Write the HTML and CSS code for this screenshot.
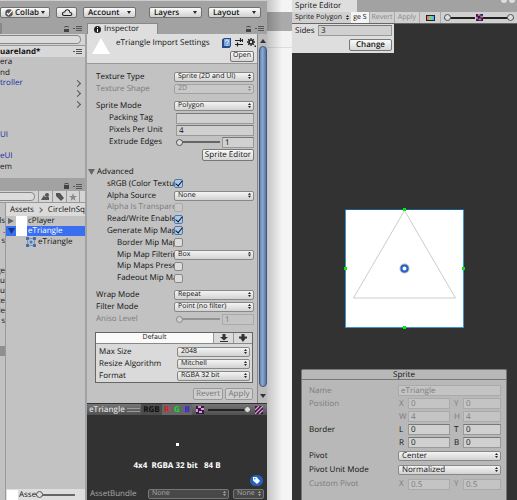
FILE: index.html
```html
<!DOCTYPE html>
<html lang="en">

<head>
    <meta charset="UTF-8">
    <meta name="viewport" content="width=device-width, initial-scale=1.0">
    <title>Unity - Sprite Editor</title>
    <link rel="stylesheet" href="styles.css">
</head>

<body>
    <div class="editor">
        <div class="toolbar">
            <button class="drop collab"><svg width="8" height="8" viewBox="0 0 8 8"><circle cx="4" cy="4" r="3.8" fill="#555"/><path d="M2 4l1.5 1.6L7 1.6" fill="none" stroke="#fff" stroke-width="1.2"/></svg>Collab</button>
            <button class="cloud" aria-label="Services"><svg width="12" height="9" viewBox="0 0 12 9"><path d="M3 7.5h6.2c2.3-.2 2.2-3-.2-3C8.700 1.500 4.500.5 3.800 4 .8 3.800.8 7.300 3 7.500z" fill="none" stroke="#222" stroke-width="1.1"/></svg></button>
            <button class="drop account">Account</button>
            <button class="drop layers">Layers</button>
            <button class="drop layout">Layout</button>
        </div>

        <div class="docks">
            <div class="left">
                <div class="tabs"><span class="tab stub"></span><span class="lock"></span><span class="menu"></span></div>
                <div class="search-row"><input type="text" class="search" aria-label="Search hierarchy"></div>
                <div class="scene"><b>uareland*</b><span class="menu"></span></div>
                <ul class="hierarchy">
                    <li>era</li>
                    <li>nd</li>
                    <li class="prefab more">troller</li>
                    <li class="more"></li>
                    <li class="more"></li>
                    <li></li>
                    <li></li>
                    <li class="prefab">UI</li>
                    <li></li>
                    <li class="prefab">eUI</li>
                    <li>em</li>
                </ul>

                <div class="tabs project-tabs"><span class="lock"></span><span class="menu"></span></div>
                <div class="search-row project-search">
                    <input type="text" class="search" aria-label="Search project">
                    <button class="filter" aria-label="Type"><svg width="9" height="8" viewBox="0 0 9 8"><path d="M0 7l3-5 2 5zM4 4h4v3H4z" fill="#555"/><circle cx="6" cy="2" r="2" fill="#555"/></svg></button>
                    <button class="filter" aria-label="Label"><svg width="8" height="8" viewBox="0 0 8 8"><path d="M0 0h4l4 5-3 3-5-5z" fill="#555"/></svg></button>
                    <button class="filter" aria-label="Favorite"><svg width="8" height="8" viewBox="0 0 8 8"><path d="M4 0l1 3h3L5.600 4.800 6.500 8 4 6 1.500 8l.9-3.200L0 3h3z" fill="#888"/></svg></button>
                </div>
                <div class="project">
                    <ul class="folders">
                        <li></li>
                        <li>ls</li>
                        <li>.</li>
                        <li>s</li>
                        <li></li>
                        <li></li>
                        <li>ge</li>
                        <li>u</li>
                        <li>ou</li>
                        <li>te</li>
                        <li>le</li>
                        <li>s</li>
                        <li></li>
                        <li></li>
                        <li class="current"></li>
                    </ul>
                    <div class="assets">
                        <div class="crumbs">Assets<i></i>CircleInSqu</div>
                        <ul class="files">
                            <li><span class="fold closed"></span><span class="thumb"></span>cPlayer</li>
                            <li class="selected"><span class="fold"></span><span class="thumb"></span>eTriangle</li>
                            <li class="child"><svg width="10" height="10" viewBox="0 0 10 10"><path d="M1.500 1.500h7v7h-7z" fill="#aebfd4" stroke="#7d93ae"/><path d="M0 0h3v3H0zM7 0h3v3H7zM0 7h3v3H0zM7 7h3v3H7z" fill="#476fa5"/><circle cx="5" cy="5" r="1.500" fill="#4a79b8"/></svg>eTriangle</li>
                        </ul>
                        <div class="status"><span class="thumb"></span><label for="zoom">Asse</label><input type="range" id="zoom" value="0"></div>
                    </div>
                </div>
            </div>

            <div class="inspector">
                <div class="tabs"><span class="tab"><svg width="7" height="7" viewBox="0 0 7 7"><circle cx="3.500" cy="3.500" r="3.500" fill="#222"/><path d="M3.500 1v1M3.500 3v3" stroke="#fff"/></svg>Inspector</span><span class="lock"></span><span class="menu"></span></div>
                <div class="scroller">
                    <div class="content">
                        <div class="header">
                            <svg class="sprite-icon" width="18" height="16" viewBox="0 0 18 16"><path d="M9 0l9 16H0z" fill="#fff"/></svg>
                            <h1>eTriangle Import Settings</h1>
                            <div class="tools">
                                <svg width="9" height="10" viewBox="0 0 9 10"><path d="M0 1.500L2 0h7v8L7.500 10H0z" fill="#274b86"/><path d="M2 1h6v7H2z" fill="#7ba5dc"/><path d="M3.500 3.500c0-2 3-2 3 0 0 1-1.500 1-1.500 2.500M5 7v1" stroke="#fff" fill="none"/></svg>
                                <svg width="8" height="9" viewBox="0 0 8 9"><path d="M0 2.500h8M0 6.500h8M5.500 0v4M2.500 4.500v4M7.500 1v3" stroke="#222" stroke-width="1.200"/></svg>
                                <svg width="9" height="9" viewBox="0 0 9 9"><circle cx="4" cy="4" r="2" fill="none" stroke="#222" stroke-width="1.600"/><path d="M4 0v1.500M4 6.500V8M0 4h1.500M6.500 4H8M1.200 1.200l1 1M5.800 5.800l1 1M1.200 6.800l1-1M5.800 2.200l1-1" stroke="#222" stroke-width="1.300"/><path d="M7.500 7.500H9V9H7.500z" fill="#222"/></svg>
                            </div>
                            <button class="btn open">Open</button>
                        </div>

                        <div class="rows group-type">
                            <div class="row"><label for="texture-type">Texture Type</label><span class="popup"><select id="texture-type"><option>Sprite (2D and UI)</option></select></span></div>
                            <div class="row off"><label for="texture-shape">Texture Shape</label><span class="popup"><select id="texture-shape" disabled><option>2D</option></select></span></div>
                        </div>
                        <div class="rows group-sprite">
                            <div class="row"><label for="sprite-mode">Sprite Mode</label><span class="popup"><select id="sprite-mode"><option>Polygon</option></select></span></div>
                            <div class="row sub"><label for="packing">Packing Tag</label><input type="text" id="packing"></div>
                            <div class="row sub"><label for="ppu">Pixels Per Unit</label><input type="text" id="ppu" value="4"></div>
                            <div class="row sub"><label for="extrude">Extrude Edges</label><input type="range" id="extrude" value="0"><input type="text" class="num" value="1" aria-label="Extrude value"></div>
                        </div>
                        <button class="btn sprite-btn">Sprite Editor</button>
                        <div class="advanced"><span class="fold"></span>Advanced</div>
                        <div class="rows group-advanced">
                            <div class="row in"><label for="srgb">sRGB (Color Texture)</label><input type="checkbox" id="srgb" checked></div>
                            <div class="row in"><label for="alpha">Alpha Source</label><span class="popup"><select id="alpha"><option>None</option></select></span></div>
                            <div class="row in off"><label for="transp">Alpha Is Transparency</label><input type="checkbox" id="transp" disabled></div>
                            <div class="row in"><label for="rw">Read/Write Enabled</label><input type="checkbox" id="rw" checked></div>
                            <div class="row in"><label for="mips">Generate Mip Maps</label><input type="checkbox" id="mips" checked></div>
                            <div class="row deep"><label for="border-mips">Border Mip Maps</label><input type="checkbox" id="border-mips"></div>
                            <div class="row deep"><label for="mip-filter">Mip Map Filtering</label><span class="popup"><select id="mip-filter"><option>Box</option></select></span></div>
                            <div class="row deep"><label for="preserve">Mip Maps Preserve Coverage</label><input type="checkbox" id="preserve"></div>
                            <div class="row deep"><label for="fadeout">Fadeout Mip Maps</label><input type="checkbox" id="fadeout"></div>
                        </div>
                        <div class="rows group-filter">
                            <div class="row"><label for="wrap">Wrap Mode</label><span class="popup"><select id="wrap"><option>Repeat</option></select></span></div>
                            <div class="row"><label for="filter">Filter Mode</label><span class="popup"><select id="filter"><option>Point (no filter)</option></select></span></div>
                            <div class="row off"><label for="aniso">Aniso Level</label><input type="range" id="aniso" value="0" disabled><input type="text" class="num" value="1" aria-label="Aniso value" disabled></div>
                        </div>

                        <div class="platform">
                            <div class="platform-tabs">
                                <button class="active">Default</button>
                                <button aria-label="Standalone"><svg width="8" height="8" viewBox="0 0 8 8"><path d="M2.500 0h3v3H8L4 6.500 0 3h2.500zM0 7h8v1H0z" fill="#333"/></svg></button>
                                <button aria-label="Android"><svg width="8" height="8" viewBox="0 0 8 8"><path d="M2.500 0h3v2.500H8v2H6.500L4 8 1.500 4.500H0v-2h2.500z" fill="#333"/></svg></button>
                            </div>
                            <div class="rows">
                                <div class="row"><label for="max">Max Size</label><span class="popup"><select id="max"><option>2048</option></select></span></div>
                                <div class="row"><label for="resize">Resize Algorithm</label><span class="popup"><select id="resize"><option>Mitchell</option></select></span></div>
                                <div class="row"><label for="format">Format</label><span class="popup"><select id="format"><option>RGBA 32 bit</option></select></span></div>
                            </div>
                        </div>
                        <div class="actions"><button class="btn" disabled>Revert</button><button class="btn" disabled>Apply</button></div>
                    </div>
                    <div class="scrollbar"><span class="up"></span><span class="bar"></span><span class="down"></span></div>
                </div>

                <div class="preview-bar">
                    <b>eTriangle</b><span class="grip"></span>
                    <button class="rgb">RGB</button><button class="r">R</button><button class="g">G</button><button class="b">B</button>
                    <svg width="8" height="8" viewBox="0 0 8 8"><path d="M0 0h8v8H0z" fill="#2a1a56"/><path d="M2 0h3v2H2zM0 3h2v3H0zM5 2h3v2H5zM3 5h3v2H3z" fill="#e79ab2"/></svg>
                    <input type="range" value="100" aria-label="Mip level">
                    <svg width="8" height="8" viewBox="0 0 8 8"><path d="M0 0h8v8H0z" fill="#2a1a56"/><path d="M0 4l4-4M0 8l8-8M4 8l4-4" stroke="#e79ab2" stroke-width="1.300"/></svg>
                </div>
                <div class="preview">
                    <span class="pixel"></span>
                    <p>4x4&nbsp; RGBA 32 bit&nbsp;&nbsp; 84 B</p>
                    <button class="tag" aria-label="Asset labels"><svg width="7" height="7" viewBox="0 0 7 7"><path d="M0 0h3.500L7 4 4 7 0 3.500z" fill="#fff"/><circle cx="1.800" cy="1.800" r=".8" fill="#2560bd"/></svg></button>
                    <div class="bundle"><label for="bundle">AssetBundle</label><span class="popup"><select id="bundle"><option>None</option></select></span><span class="popup variant"><select aria-label="Variant"><option>None</option></select></span></div>
                </div>
            </div>
        </div>
    </div>

    <div class="desktop"></div>

    <div class="sprite-editor">
        <div class="title"><span>Sprite Editor</span><i></i><i></i></div>
        <div class="sprite-toolbar">
            <button class="mode">Sprite Polygon</button><span class="updown"></span>
            <button class="shape">ge S</button>
            <button disabled>Revert</button>
            <button class="apply" disabled>Apply</button>
            <button class="channels" aria-label="Channels"><svg width="9" height="6" viewBox="0 0 9 6"><path d="M0 0h9v6H0z" fill="#222"/><path d="M1 1h2v4H1z" fill="#ff6d69"/><path d="M3 1h3v4H3z" fill="#65d98a"/><path d="M6 1h2v4H6z" fill="#5bb2f5"/></svg></button>
            <input type="range" value="0" aria-label="Zoom">
            <svg width="7" height="7" viewBox="0 0 8 8"><path d="M0 0h8v8H0z" fill="#2a1a56"/><path d="M2 0h3v2H2zM0 3h2v3H0zM5 2h3v2H5zM3 5h3v2H3z" fill="#d77a92"/></svg>
            <input type="range" value="100" aria-label="Mip">
        </div>
        <div class="canvas">
            <div class="sides">
                <div><label for="sides">Sides</label><input type="text" id="sides" value="3"></div>
                <button class="btn">Change</button>
            </div>
            <svg class="sprite" width="123" height="123" viewBox="0 0 123 123">
                <path d="M2.500 2.500h118v118h-118z" fill="#fff" stroke="#3c96d2"/>
                <path d="M2 2.500h119" stroke="#1b5c8c"/>
                <path d="M61.500 3.500L112.500 91h-102z" fill="none" stroke="#ccc"/>
                <circle cx="61.500" cy="61.500" r="3.500" fill="#fff" stroke="#aab4c4" stroke-width="3"/>
                <circle cx="61.500" cy="61.500" r="3" fill="#fff" stroke="#2862c8" stroke-width="2"/>
                <path d="M60 1h3v3h-3zM60 119h3v3h-3zM1 60h3v3H1zM119 60h3v3h-3z" fill="#0e0"/>
            </svg>
            <div class="sprite-panel">
                <h2>Sprite</h2>
                <div class="fields">
                    <div class="field off"><label for="name">Name</label><input type="text" id="name" value="eTriangle" disabled></div>
                    <div class="field off"><span>Position</span><label class="axis">X<input type="text" value="0" disabled></label><label class="axis">Y<input type="text" value="0" disabled></label></div>
                    <div class="field off"><span></span><label class="axis">W<input type="text" value="4" disabled></label><label class="axis">H<input type="text" value="4" disabled></label></div>
                    <div class="field"><span>Border</span><label class="axis">L<input type="text" value="0"></label><label class="axis">T<input type="text" value="0"></label></div>
                    <div class="field"><span></span><label class="axis">R<input type="text" value="0"></label><label class="axis">B<input type="text" value="0"></label></div>
                    <div class="field tall"><label for="pivot">Pivot</label><span class="popup"><select id="pivot"><option>Center</option></select></span></div>
                    <div class="field tall"><label for="unit-mode">Pivot Unit Mode</label><span class="popup"><select id="unit-mode"><option>Normalized</option></select></span></div>
                    <div class="field tall off"><span>Custom Pivot</span><label class="axis">X<input type="text" value="0.5" disabled></label><label class="axis">Y<input type="text" value="0.5" disabled></label></div>
                </div>
            </div>
        </div>
    </div>
</body>

</html>
```
FILE: styles.css
```css
* {
    box-sizing: border-box;
}

body {
    display: grid;
    grid-template-columns: 267fr 25fr 225fr;
    min-height: 100vh;
    margin: 0;
    background-color: #f2f2f2;
    color: #111;
    font-family: "Open Sans", "Noto Sans", sans-serif;
    font-size: 8px;
    font-weight: 500;
    line-height: 10px;
    text-rendering: geometricPrecision;
}

ul {
    list-style: none;
    margin: 0;
    padding: 0;
}

svg {
    display: block;
    flex: none;
}

button,
input,
select {
    font: inherit;
    color: inherit;
    text-rendering: inherit;
    margin: 0;
    padding: 0;
    border: none;
    background: none;
    min-width: 0;
}

.editor,
.sprite-editor {
    display: flex;
    flex-direction: column;
    min-width: 0;
    background-color: #a2a2a2;
}

/* shared controls */
.btn {
    height: 12px;
    border: 1px solid #777;
    border-radius: 2px;
    background: linear-gradient(#fafafa, #d6d6d6);
}

.btn:disabled {
    color: #777;
    border-color: #999;
    background: #cfcfcf;
}

.popup {
    position: relative;
    display: block;
    height: 10px;
}

.popup select {
    appearance: none;
    display: block;
    width: 100%;
    height: 10px;
    padding-left: 3px;
    border: 1px solid #888;
    border-radius: 2px;
    background: linear-gradient(#f4f4f4, #d2d2d2);
    font-size: 7px;
    line-height: 8px;
    opacity: 1;
}

.popup::after,
.updown {
    content: "";
    width: 3px;
    height: 5px;
    background-color: #222;
    clip-path: polygon(50% 0, 100% 40%, 0 40%, 0 60%, 100% 60%, 50% 100%, 0 60%, 0 40%);
}

.popup::after {
    position: absolute;
    right: 3px;
    top: 2px;
}

.off {
    color: #7b7b7b;
}

.off .popup select {
    border-color: #a2a2a2;
    background: #c8c8c8;
}

.off .popup::after {
    background-color: #888;
}

input[type="text"] {
    height: 11px;
    padding-left: 2px;
    border: 1px solid #999;
    border-top-color: #777;
    background-color: #d0d0d0;
}

.off input[type="text"] {
    border-color: #aaa;
    background-color: #c4c4c4;
}

input[type="checkbox"] {
    appearance: none;
    position: relative;
    width: 9px;
    height: 9px;
    border: 1px solid #888;
    border-radius: 2px;
    background-color: #dcdcdc;
}

input[type="checkbox"]:checked {
    border-color: #5577a8;
    background-color: #a9c8ee;
}

input[type="checkbox"]:checked::after {
    content: "";
    position: absolute;
    left: 2px;
    top: -1px;
    width: 3px;
    height: 6px;
    border: solid #111;
    border-width: 0 1px 1px 0;
    box-sizing: content-box;
    transform: rotate(40deg);
}

input[type="checkbox"]:disabled {
    border-color: #aaa;
    background-color: #c8c8c8;
}

input[type="range"] {
    appearance: none;
    height: 8px;
    background: linear-gradient(#666, #666) center / 100% 2px no-repeat;
}

input[type="range"]::-webkit-slider-thumb {
    appearance: none;
    width: 7px;
    height: 7px;
    border: 1px solid #555;
    border-radius: 50%;
    background-color: #ddd;
}

input[type="range"]:disabled {
    opacity: 0.5;
}

/* top toolbar */
.toolbar {
    display: flex;
    height: 23px;
    padding: 6px 0 5px;
    border-top: 1px solid #ccc;
}

.toolbar button {
    display: flex;
    align-items: center;
    border: 1px solid #707070;
    border-radius: 2px;
    background: linear-gradient(#fafafa, #d0d0d0);
    font-weight: 600;
}

.toolbar .drop {
    padding: 0 4px;
}

.drop::after {
    content: "";
    margin-left: auto;
    border: 2px solid transparent;
    border-top: 3px solid #222;
    border-bottom: 0;
}

.collab {
    flex: 0 0 50px;
    gap: 2px;
    border-left: 0;
}

.cloud {
    flex: 0 0 21px;
    justify-content: center;
    margin: 0 6px;
}

.account,
.layers,
.layout {
    flex: 0 0 53px;
}

.layers {
    margin: 0 6px 0 13px;
}

.docks {
    display: grid;
    grid-template-columns: 85fr 180fr;
    gap: 2px;
    flex: 1;
}

.left,
.inspector {
    display: flex;
    flex-direction: column;
    min-width: 0;
    background-color: #c2c2c2;
}

.tabs {
    display: flex;
    align-items: center;
    gap: 4px;
    height: 11px;
    padding-right: 3px;
    background-color: #a2a2a2;
}

.tab {
    display: flex;
    align-items: center;
    gap: 3px;
    height: 11px;
    margin-right: auto;
    padding: 0 18px 0 6px;
    border: 1px solid #888;
    border-bottom: 0;
    background-color: #dedede;
}

.tab.stub {
    width: 2px;
    padding: 0;
}

.lock {
    width: 5px;
    height: 6px;
    margin-left: auto;
    border: solid #444;
    border-width: 1px 0 0;
    border-radius: 2px 2px 0 0;
    background: linear-gradient(transparent 30%, #444 30%);
}

.menu {
    width: 9px;
    height: 5px;
    background:
        linear-gradient(#555, #555) left 2px / 2px 1px no-repeat,
        repeating-linear-gradient(#555 0 1px, transparent 1px 2px) right / 6px 5px no-repeat;
}

/* hierarchy */
.search-row {
    display: flex;
    align-items: center;
    height: 12px;
    border-bottom: 1px solid #999;
    background-color: #d4d4d4;
}

input.search {
    flex: 1;
    height: 9px;
    margin-right: 4px;
    border: 1px solid #888;
    border-left: 0;
    border-radius: 0 5px 5px 0;
    background-color: #dcdcdc;
}

.scene {
    display: flex;
    align-items: center;
    justify-content: space-between;
    height: 11px;
    padding-right: 3px;
    background-color: #d8d8d8;
}

.scene b {
    font-weight: 700;
}

.hierarchy {
    display: grid;
    grid-auto-rows: 1fr;
    height: 115px;
    margin-bottom: 6px;
}

.hierarchy li {
    display: flex;
    align-items: center;
    justify-content: space-between;
    padding-right: 5px;
}

.prefab {
    color: #1a2f9e;
}

.more::after {
    content: "";
    width: 4px;
    height: 4px;
    margin-left: auto;
    border: solid #555;
    border-width: 1px 1px 0 0;
    transform: rotate(45deg);
}

/* project */
.project-tabs {
    height: 13px;
    padding-top: 3px;
}

.project-search input.search {
    margin-right: 3px;
}

.filter {
    display: flex;
    align-items: center;
    justify-content: center;
    width: 14px;
    height: 11px;
    border-left: 1px solid #999;
}

.project-search .filter:last-child {
    margin-right: 5px;
    border-right: 1px solid #999;
}

.project {
    display: flex;
    flex: 1;
}

.folders {
    width: 6px;
    padding-top: 3px;
    border-right: 1px solid #999;
}

.folders li {
    display: flex;
    justify-content: flex-end;
    height: 10px;
    overflow: hidden;
}

.folders .current {
    background-color: #8f8f8f;
}

.assets {
    display: flex;
    flex-direction: column;
    flex: 1;
    min-width: 0;
}

.crumbs {
    display: flex;
    align-items: center;
    height: 13px;
    padding-left: 4px;
    overflow: hidden;
    background-color: #dadada;
}

.crumbs i {
    width: 4px;
    height: 4px;
    margin: 0 6px 0 4px;
    flex: none;
    border: solid #666;
    border-width: 1px 1px 0 0;
    transform: rotate(45deg);
}

.files li {
    display: flex;
    align-items: center;
    height: 10px;
    padding-left: 2px;
}

.fold {
    width: 7px;
    height: 6px;
    flex: none;
    background-color: #666;
    clip-path: polygon(0 0, 100% 0, 50% 100%);
}

.fold.closed {
    width: 6px;
    margin-right: 1px;
    clip-path: polygon(0 0, 100% 50%, 0 100%);
}

.thumb {
    width: 11px;
    height: 10px;
    margin: 0 1px 0 1px;
    background-color: #fff;
}

.files .selected {
    background-color: #3a6fef;
    color: #fff;
}

.selected .fold {
    background-color: #16388c;
}

.files .child {
    gap: 2px;
    height: 12px;
    padding-left: 20px;
}

.status {
    display: flex;
    align-items: center;
    height: 11px;
    margin-top: auto;
    padding-right: 10px;
    background-color: #dedede;
}

.status input {
    flex: 1;
}

/* inspector */
.scroller {
    display: flex;
}

.content {
    flex: 1;
    min-width: 0;
    height: 369px;
}

.header {
    display: grid;
    grid-template-columns: 24px 1fr auto;
    height: 30px;
    padding: 4px 1px 0 5px;
    border-bottom: 1px solid #999;
    background-color: #dedede;
}

.header h1 {
    margin: 0;
    font-size: 8px;
    font-weight: 500;
    line-height: 10px;
    white-space: nowrap;
}

.sprite-icon {
    grid-row: span 2;
}

.tools {
    display: flex;
    gap: 4px;
}

.open {
    grid-column: 2 / 4;
    justify-self: end;
    width: 24px;
    height: 11px;
    margin: 1px 2px 0 0;
    font-size: 7px;
    line-height: 8px;
}

.rows {
    display: grid;
    grid-auto-rows: 1fr;
    padding: 0 3px 0 9px;
}

.row {
    display: grid;
    grid-template-columns: 78px 1fr;
    align-items: center;
}

.row label {
    overflow: hidden;
    white-space: nowrap;
}

.row.sub label {
    padding-left: 13px;
}

.row.in label {
    padding-left: 11px;
}

.row.deep label {
    padding-left: 21px;
}

.row.sub {
    grid-template-columns: 80px 1fr;
}

.row:has(.num) {
    grid-template-columns: 78px 1fr 32px;
    column-gap: 2px;
}

.group-type {
    height: 24px;
    margin-top: 7px;
}

.group-sprite {
    height: 48px;
    margin-top: 5px;
}

.sprite-btn {
    display: block;
    width: 52px;
    margin: 1px 3px 0 auto;
}

.advanced {
    display: flex;
    align-items: center;
    gap: 2px;
    height: 12px;
    margin-top: 5px;
    padding-left: 1px;
}

.group-advanced {
    height: 106px;
}

.group-filter {
    height: 36px;
    margin-top: 5px;
}

.platform {
    height: 51px;
    margin: 7px 4px 0 8px;
    border: 1px solid #666;
    background-color: #dadada;
}

.platform-tabs {
    display: grid;
    grid-template-columns: 1fr 20px 19px;
    height: 11px;
    margin-bottom: 2px;
    border-bottom: 1px solid #888;
    font-size: 7px;
}

.platform-tabs button {
    display: flex;
    align-items: center;
    justify-content: center;
    border-left: 1px solid #999;
}

.platform-tabs .active {
    border-left: 0;
    background-color: #fafafa;
}

.platform .rows {
    height: 36px;
    padding: 0 2px 0 3px;
}

.actions {
    display: flex;
    justify-content: flex-end;
    gap: 2px;
    margin: 5px 4px 0 0;
}

.actions .btn {
    width: 30px;
}

.actions .btn:last-child {
    width: 28px;
}

.scrollbar {
    display: flex;
    flex-direction: column;
    align-items: center;
    width: 10px;
    padding: 5px 0;
    border-left: 1px solid #888;
    background-color: #bbb;
}

.up,
.down {
    border: 3px solid transparent;
    border-bottom: 4px solid #333;
    border-top: 0;
}

.down {
    border-top: 4px solid #333;
    border-bottom: 0;
}

.bar {
    flex: 1;
    width: 8px;
    margin: 3px 0 7px;
    border: 1px solid #40587f;
    border-radius: 4px;
    background: linear-gradient(90deg, #6283b5, #8ea9d0 40%, #5674a3);
}

/* texture preview */
.preview-bar {
    display: flex;
    align-items: center;
    height: 12px;
    padding: 0 4px 0 2px;
    border-top: 1px solid #333;
    background: linear-gradient(#767676, #505050);
    color: #ddd;
}

.preview-bar b {
    font-weight: 600;
}

.grip {
    flex: 1;
    height: 4px;
    margin: 0 1px 0 2px;
    border: solid #999;
    border-width: 1px 0;
}

.preview-bar button {
    width: 10px;
    height: 11px;
    font-weight: 700;
    background-color: #666;
}

.preview-bar .rgb {
    width: 21px;
    color: #111;
    background-color: #4c4c4c;
}

.preview-bar .r {
    color: #e21b1b;
}

.preview-bar .g {
    color: #13dc2f;
}

.preview-bar .b {
    margin-right: 4px;
    color: #3424e0;
}

.preview-bar input {
    width: 43px;
    margin: 0 4px;
    background-image: linear-gradient(#222, #222);
}

.preview {
    display: flex;
    flex-direction: column;
    flex: 1;
    background-color: #323232;
    color: #fff;
}

.pixel {
    align-self: center;
    width: 3px;
    height: 3px;
    margin-top: 28px;
    background-color: #fff;
}

.preview p {
    margin: 15px 0 4px;
    text-align: center;
    font-weight: 700;
}

.tag {
    display: flex;
    align-items: center;
    justify-content: center;
    align-self: flex-end;
    width: 13px;
    height: 11px;
    margin-right: 4px;
    border-radius: 6px;
    background-color: #2560bd;
}

.bundle {
    display: grid;
    grid-template-columns: 54px 1fr 31px;
    column-gap: 4px;
    align-items: center;
    margin-top: auto;
    padding: 0 3px 1px 3px;
    color: #aaa;
}

.bundle .popup select {
    border-color: #777;
    background: #484848;
}

.bundle .popup::after {
    background-color: #aaa;
}

/* strip of the windows behind */
.desktop {
    background:
        linear-gradient(90deg, rgba(0, 0, 0, 0.2), transparent 60%),
        linear-gradient(#f4f4f4 12px, #aaa 12px, #aaa 31px, #f2f2f2 31px, #f2f2f2 47px, #ddd 47px, #ddd 48px, #f4f4f4 48px);
}

/* sprite editor window */
.title {
    display: flex;
    gap: 2px;
    height: 12px;
    padding-right: 2px;
}

.title span {
    width: 65px;
    margin-right: auto;
    padding: 1px 0 0 3px;
    background-color: #dedede;
}

.title i {
    width: 6px;
    height: 3px;
    border-radius: 0 0 3px 3px;
    background-color: #ddd;
}

.sprite-toolbar {
    display: flex;
    align-items: center;
    height: 12px;
    padding-right: 2px;
    border-bottom: 1px solid #666;
    background-color: #d0d0d0;
    font-size: 7px;
}

.sprite-toolbar button {
    width: 25px;
    height: 11px;
    flex: none;
    white-space: nowrap;
    border-right: 1px solid #aaa;
}

.sprite-toolbar button:disabled {
    color: #888;
}

.sprite-toolbar .mode {
    width: 53px;
    padding-left: 3px;
    border: 0;
    text-align: left;
}

.updown {
    margin: 0 2px 0 1px;
    flex: none;
}

.sprite-toolbar .shape {
    width: 19px;
    background-color: #f4f4f4;
}

.sprite-toolbar .channels {
    display: flex;
    align-items: center;
    justify-content: center;
    width: 21px;
    margin-right: 3px;
}

.sprite-toolbar input {
    flex: 1;
    margin-right: 1px;
    background-image: linear-gradient(#222, #222);
}

.canvas {
    display: flex;
    flex-direction: column;
    flex: 1;
    background-color: #323232;
}

.sides {
    width: 102px;
    height: 29px;
    padding: 1px 2px 0 3px;
    background-color: #dedede;
}

.sides div {
    display: grid;
    grid-template-columns: 23px 1fr;
    align-items: center;
}

.sides .btn {
    display: block;
    width: 43px;
    margin: 3px 0 0 auto;
    font-weight: 600;
}

.sprite {
    align-self: center;
    margin-top: 154px;
}

.sprite-panel {
    flex: 1;
    margin: 39px 10px 0 9px;
    border: 1px solid #777;
    border-bottom: 0;
    border-radius: 2px 2px 0 0;
    background-color: #b8b8b8;
}

.sprite-panel h2 {
    height: 10px;
    margin: 0;
    border-bottom: 1px solid #777;
    font-size: 8px;
    font-weight: 500;
    line-height: 10px;
    text-align: center;
}

.fields {
    padding: 4px 5px 0 7px;
}

.field {
    display: grid;
    grid-template-columns: 89px 1fr;
    align-items: center;
    height: 13px;
}

.field:has(.axis) {
    grid-template-columns: 90px 1fr 1fr;
}

.field.tall {
    height: 14px;
}

.axis {
    display: grid;
    grid-template-columns: 9px 1fr;
    align-items: center;
}

.axis + .axis {
    padding-left: 4px;
}

.field .popup select {
    font-size: 8px;
}
```
